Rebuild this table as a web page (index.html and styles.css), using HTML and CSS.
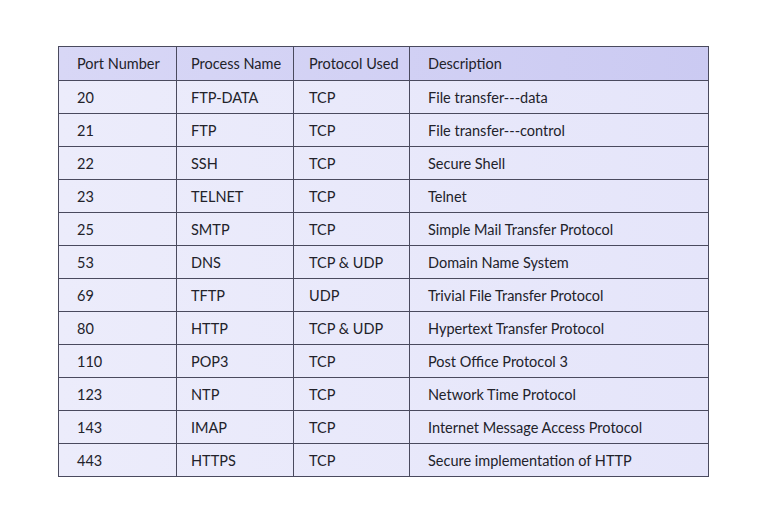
FILE: index.html
```html
<!DOCTYPE html>
<html>
<head>
<meta charset="utf-8">
<link rel="stylesheet" href="styles.css">
</head>
<body>
<div class="page">
<table class="ports">
  <colgroup>
    <col class="c1"><col class="c2"><col class="c3"><col class="c4">
  </colgroup>
  <thead>
    <tr><th>Port Number</th><th>Process Name</th><th>Protocol Used</th><th>Description</th></tr>
  </thead>
  <tbody>
    <tr><td>20</td><td>FTP-DATA</td><td>TCP</td><td>File transfer---data</td></tr>
    <tr><td>21</td><td>FTP</td><td>TCP</td><td>File transfer---control</td></tr>
    <tr><td>22</td><td>SSH</td><td>TCP</td><td>Secure Shell</td></tr>
    <tr><td>23</td><td>TELNET</td><td>TCP</td><td>Telnet</td></tr>
    <tr><td>25</td><td>SMTP</td><td>TCP</td><td>Simple Mail Transfer Protocol</td></tr>
    <tr><td>53</td><td>DNS</td><td>TCP &amp; UDP</td><td>Domain Name System</td></tr>
    <tr><td>69</td><td>TFTP</td><td>UDP</td><td>Trivial File Transfer Protocol</td></tr>
    <tr><td>80</td><td>HTTP</td><td>TCP &amp; UDP</td><td>Hypertext Transfer Protocol</td></tr>
    <tr><td>110</td><td>POP3</td><td>TCP</td><td>Post Office Protocol 3</td></tr>
    <tr><td>123</td><td>NTP</td><td>TCP</td><td>Network Time Protocol</td></tr>
    <tr><td>143</td><td>IMAP</td><td>TCP</td><td>Internet Message Access Protocol</td></tr>
    <tr><td>443</td><td>HTTPS</td><td>TCP</td><td>Secure implementation of HTTP</td></tr>
  </tbody>
</table>
</div>
</body>
</html>
```
FILE: styles.css
```css
html, body {
  margin: 0;
  padding: 0;
  background: #ffffff;
}
.page {
  width: 768px;
  height: 506px;
  padding: 46px 0 0 58px;
  box-sizing: border-box;
}
.ports {
  border-collapse: collapse;
  table-layout: fixed;
  width: 650px;
  font-family: "Lato", "Open Sans", sans-serif;
  font-size: 14.5px;
  color: #22222a;
}
.c1 { width: 118px; }
.c2 { width: 117px; }
.c3 { width: 116px; }
.c4 { width: 299px; }
.ports th, .ports td {
  border: 1.5px solid #4a4a5e;
  text-align: left;
  padding: 0;
  white-space: nowrap;
  font-weight: 400;
}
.ports th:nth-child(1), .ports td:nth-child(1) { padding-left: 18px; }
.ports th:nth-child(2), .ports td:nth-child(2) { padding-left: 14px; }
.ports th:nth-child(3), .ports td:nth-child(3) { padding-left: 15px; }
.ports th:nth-child(4), .ports td:nth-child(4) { padding-left: 18px; }
.ports th {
  height: 33px;
  font-size: 14.5px;
}
.ports thead tr {
  background: linear-gradient(90deg, #d8d7f6, #cbcaf2);
}
.ports td {
  height: 32px;
}
.ports tbody tr {
  background: linear-gradient(90deg, #ececfb, #e5e5fa);
}
```
